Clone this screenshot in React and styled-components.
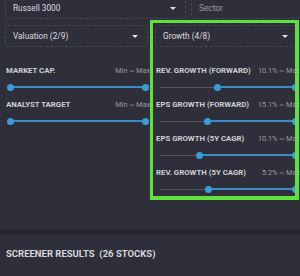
import React from 'react';
import styled, { createGlobalStyle } from 'styled-components';

const GlobalStyle = createGlobalStyle`
  body {
    margin: 0;
    background: #2e2f3a;
    font-family: Roboto, "Liberation Sans", sans-serif;
    overflow: hidden;
  }
`;

const Page = styled.div`
  position: relative;
  width: 300px;
  height: 276px;
  overflow: hidden;
  background: #2e2f3a;
`;

const TopRow = styled.div`
  display: flex;
  gap: 5px;
  margin-top: -3px;
  padding-left: 5px;
`;

const Select = styled.div`
  box-sizing: border-box;
  flex: none;
  width: ${(p) => p.width || 143}px;
  height: 22px;
  border: 1px dashed #464753;
  border-radius: 3px;
  padding: 0 9px 0 7px;
  display: flex;
  align-items: center;
  justify-content: space-between;
  font-size: 8.3px;
  color: ${(p) => (p.placeholder ? '#9b9ca3' : '#dcdce0')};
  white-space: nowrap;
`;

const Arrow = styled.span`
  width: 0;
  height: 0;
  border-left: 3px solid transparent;
  border-right: 3px solid transparent;
  border-top: 3px solid #e4e4e8;
`;

const FilterGrid = styled.div`
  display: grid;
  grid-template-columns: 143px 143px;
  column-gap: 7px;
  padding-left: 5px;
  margin-top: 6px;
`;

const Column = styled.div`
  display: flex;
  flex-direction: column;
`;

const FilterList = styled.div`
  display: flex;
  flex-direction: column;
  gap: 5px;
  margin-top: 18px;
`;

const Item = styled.div`
  display: flex;
  flex-direction: column;
  gap: 5px;
`;

const LabelRow = styled.div`
  display: flex;
  justify-content: space-between;
  align-items: center;
  height: 10px;
  font-size: 7.8px;
  white-space: nowrap;
  padding-left: 1px;
  margin-right: -2px;
`;

const Label = styled.span`
  font-weight: 700;
  color: #cfcfd4;
`;

const Value = styled.span`
  font-size: 7.3px;
  color: #9a9ba2;
`;

const SliderBox = styled.div`
  position: relative;
  height: 14px;
  margin: 0 3px 0 5px;
`;

const Rail = styled.div`
  position: absolute;
  left: 0;
  right: 0;
  top: 7px;
  height: 1px;
  background: rgba(255, 255, 255, 0.18);
`;

const Fill = styled.div`
  position: absolute;
  top: 6px;
  height: 2px;
  background: #3a8cc2;
`;

const Thumb = styled.div`
  position: absolute;
  top: 3.5px;
  width: 7px;
  height: 7px;
  margin-left: -3.5px;
  border-radius: 50%;
  background: #3b9bd8;
`;

const Divider = styled.div`
  height: 4px;
  background: #25262f;
  margin-top: 34px;
`;

const ResultsTitle = styled.div`
  padding-left: 6px;
  margin-top: 14px;
  font-size: 9.5px;
  line-height: 12px;
  font-weight: 700;
  color: #d6d6da;
  white-space: pre;
`;

const Highlight = styled.div`
  position: absolute;
  left: 150px;
  top: 20px;
  width: 149px;
  height: 180px;
  box-sizing: border-box;
  border-style: solid;
  border-color: #5fe23b;
  border-width: 3px 4px 4px 3px;
  pointer-events: none;
`;

const Slider = ({ from }) => (
  <SliderBox>
    <Rail />
    <Fill style={{ left: `${from * 100}%`, right: 0 }} />
    <Thumb style={{ left: `${from * 100}%` }} />
    <Thumb style={{ left: '100%' }} />
  </SliderBox>
);

const Filter = ({ label, value, from }) => (
  <Item>
    <LabelRow>
      <Label>{label}</Label>
      <Value>{value}</Value>
    </LabelRow>
    <Slider from={from} />
  </Item>
);

const valuation = [
  { label: 'MARKET CAP.', value: 'Min ~ Max', from: 0 },
  { label: 'ANALYST TARGET', value: 'Min ~ Max', from: 0 },
];

const growth = [
  { label: 'REV. GROWTH (FORWARD)', value: '10.1% ~ Max', from: 0.425 },
  { label: 'EPS GROWTH (FORWARD)', value: '15.1% ~ Max', from: 0.35 },
  { label: 'EPS GROWTH (5Y CAGR)', value: '10.1% ~ Max', from: 0.29 },
  { label: 'REV. GROWTH (5Y CAGR)', value: '5.2% ~ Max', from: 0.36 },
];

const App = () => (
  <Page>
    <GlobalStyle />
    <TopRow>
      <Select width={181}>
        <span>Russell 3000</span>
        <Arrow />
      </Select>
      <Select width={181} placeholder="true">
        <span>Sector</span>
        <Arrow />
      </Select>
    </TopRow>
    <FilterGrid>
      <Column>
        <Select>
          <span>Valuation (2/9)</span>
          <Arrow />
        </Select>
        <FilterList>
          {valuation.map((f) => (
            <Filter key={f.label} {...f} />
          ))}
        </FilterList>
      </Column>
      <Column>
        <Select>
          <span>Growth (4/8)</span>
          <Arrow />
        </Select>
        <FilterList>
          {growth.map((f) => (
            <Filter key={f.label} {...f} />
          ))}
        </FilterList>
      </Column>
    </FilterGrid>
    <Divider />
    <ResultsTitle>SCREENER RESULTS  (26 STOCKS)</ResultsTitle>
    <Highlight />
  </Page>
);

export default App;
